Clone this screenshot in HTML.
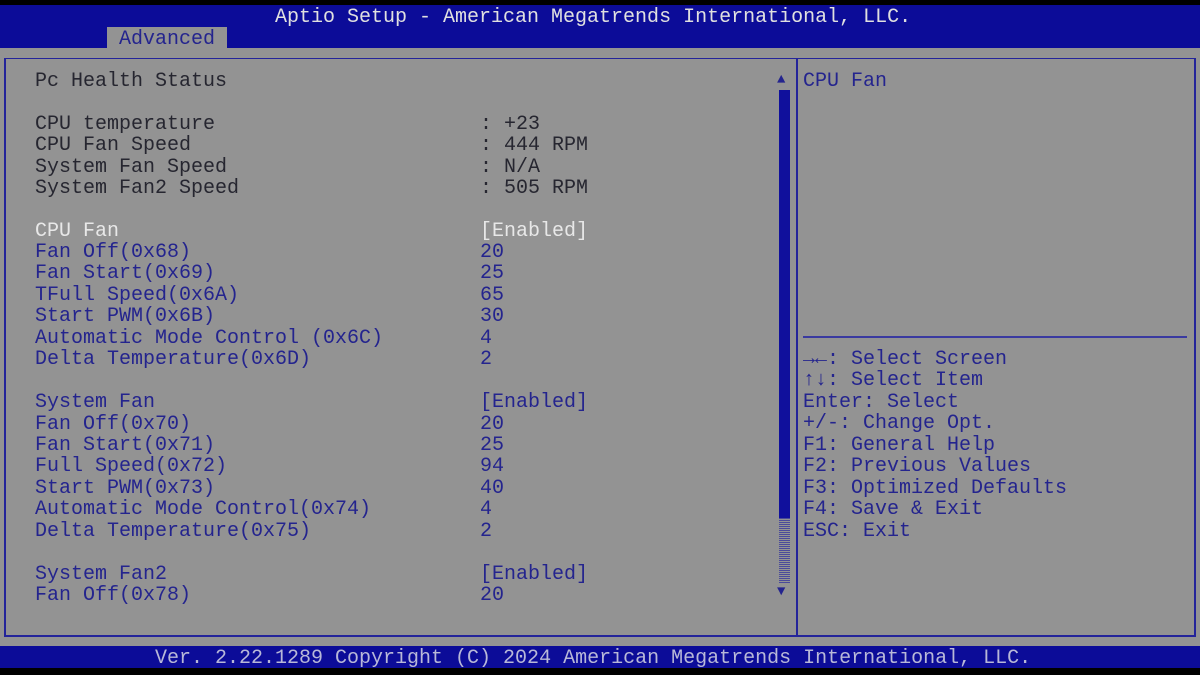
<!DOCTYPE html>
<html><head><style>
body{margin:0;width:1200px;height:675px;background:#000;position:relative;overflow:hidden;font-family:"Liberation Mono",monospace;font-size:20px}
.a{position:absolute;white-space:pre;line-height:21.43px;letter-spacing:0}
.t{color:#24248e}.d{color:#262630}.w{color:#e8e8e8}
</style></head><body>
<div style="position:absolute;left:0;top:5px;width:1200px;height:43px;background:#0c0c98"></div>
<div style="position:absolute;left:0;top:48px;width:1200px;height:598px;background:#939393"></div>
<div style="position:absolute;left:0;top:646px;width:1200px;height:22px;background:#0c0c98"></div>
<div class="a" style="left:275px;top:7px;color:#e0e0e0">Aptio Setup - American Megatrends International, LLC.</div>
<div style="position:absolute;left:107px;top:27px;width:120px;height:21px;background:#939393"></div>
<div class="a t" style="left:119px;top:29px">Advanced</div>
<div style="position:absolute;left:4px;top:58px;width:1188px;height:576px;border:2px solid #24249a;border-top-width:1px"></div>
<div style="position:absolute;left:796px;top:58px;width:2px;height:578px;background:#24249a"></div>
<div style="position:absolute;left:803px;top:336px;width:384px;height:2px;background:#3a3aa0"></div>
<div style="position:absolute;left:779px;top:90px;width:11px;height:428px;background:#10109c"></div>
<div style="position:absolute;left:779px;top:518px;width:11px;height:65px;background:repeating-linear-gradient(#4a4a9a 0 1px,#939393 1px 2px)"></div>
<div class="a t" style="left:777px;top:70px;font-size:14px">▲</div>
<div class="a t" style="left:777px;top:582px;font-size:14px">▼</div>
<div class="a d" style="left:35px;top:71px">Pc Health Status</div>
<div class="a d" style="left:35px;top:114px">CPU temperature
CPU Fan Speed
System Fan Speed
System Fan2 Speed</div>
<div class="a d" style="left:480px;top:114px">: +23
: 444 RPM
: N/A
: 505 RPM</div>
<div class="a w" style="left:35px;top:221px">CPU Fan</div>
<div class="a w" style="left:480px;top:221px">[Enabled]</div>
<div class="a t" style="left:35px;top:242px">Fan Off(0x68)
Fan Start(0x69)
TFull Speed(0x6A)
Start PWM(0x6B)
Automatic Mode Control (0x6C)
Delta Temperature(0x6D)

System Fan
Fan Off(0x70)
Fan Start(0x71)
Full Speed(0x72)
Start PWM(0x73)
Automatic Mode Control(0x74)
Delta Temperature(0x75)

System Fan2
Fan Off(0x78)</div>
<div class="a t" style="left:480px;top:242px">20
25
65
30
4
2

[Enabled]
20
25
94
40
4
2

[Enabled]
20</div>
<div class="a t" style="left:803px;top:71px">CPU Fan</div>
<div class="a t" style="left:803px;top:349px"><b>→←</b>: Select Screen
<b>↑↓</b>: Select Item
Enter: Select
+/-: Change Opt.
F1: General Help
F2: Previous Values
F3: Optimized Defaults
F4: Save &amp; Exit
ESC: Exit</div>
<div class="a" style="left:155px;top:648px;color:#b8b8d8">Ver. 2.22.1289 Copyright (C) 2024 American Megatrends International, LLC.</div>
</body></html>
